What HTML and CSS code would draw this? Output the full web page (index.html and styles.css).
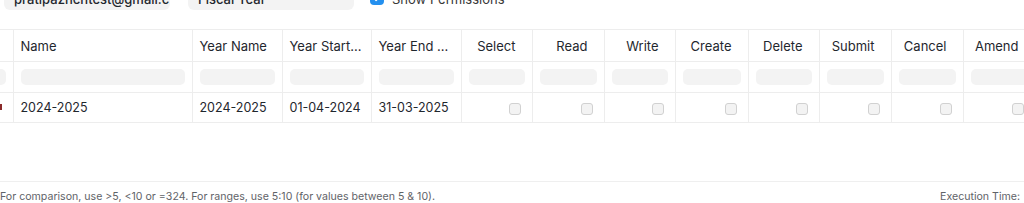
FILE: index.html
```html
<!DOCTYPE html>
<html lang="en">
<head>
    <meta charset="UTF-8">
    <title>User Permissions Report</title>
    <link rel="stylesheet" href="styles.css">
</head>
<body>

    <!-- Filters -->
    <div class="page-form">
        <div class="filter-field">pratipazhentest@gmail.c</div>
        <div class="filter-field">Fiscal Year</div>
        <label class="check-field">
            <span class="checked-box">
                <svg width="10" height="10" viewBox="0 0 10 10"><path d="M2 5.2 L4.2 7.3 L8 2.8" fill="none" stroke="#fff" stroke-width="1.6" stroke-linecap="round" stroke-linejoin="round"/></svg>
            </span>
            Show Permissions
        </label>
    </div>

    <!-- Report grid -->
    <div class="grid-wrapper">
        <table class="report-grid">
            <colgroup>
                <col style="width:40px">
                <col style="width:179px">
                <col style="width:90px">
                <col style="width:89px">
                <col style="width:90px">
                <col style="width:71px">
                <col style="width:72px">
                <col style="width:71px">
                <col style="width:73px">
                <col style="width:71px">
                <col style="width:72px">
                <col style="width:72px">
                <col style="width:72px">
            </colgroup>
            <thead>
                <tr class="head-row">
                    <th></th>
                    <th>Name</th>
                    <th>Year Name</th>
                    <th>Year Start...</th>
                    <th>Year End ...</th>
                    <th class="num">Select</th>
                    <th class="num">Read</th>
                    <th class="num">Write</th>
                    <th class="num">Create</th>
                    <th class="num">Delete</th>
                    <th class="num">Submit</th>
                    <th class="num">Cancel</th>
                    <th class="num">Amend</th>
                </tr>
                <tr class="filter-row">
                    <td><div class="filter-input"></div></td>
                    <td><div class="filter-input"></div></td>
                    <td><div class="filter-input"></div></td>
                    <td><div class="filter-input"></div></td>
                    <td><div class="filter-input"></div></td>
                    <td><div class="filter-input"></div></td>
                    <td><div class="filter-input"></div></td>
                    <td><div class="filter-input"></div></td>
                    <td><div class="filter-input"></div></td>
                    <td><div class="filter-input"></div></td>
                    <td><div class="filter-input"></div></td>
                    <td><div class="filter-input"></div></td>
                    <td><div class="filter-input"></div></td>
                </tr>
            </thead>
            <tbody>
                <tr class="data-row">
                    <td class="row-index"><span class="row-mark"></span></td>
                    <td>2024-2025</td>
                    <td>2024-2025</td>
                    <td>01-04-2024</td>
                    <td>31-03-2025</td>
                    <td class="num"><span class="cell-check"></span></td>
                    <td class="num"><span class="cell-check"></span></td>
                    <td class="num"><span class="cell-check"></span></td>
                    <td class="num"><span class="cell-check"></span></td>
                    <td class="num"><span class="cell-check"></span></td>
                    <td class="num"><span class="cell-check"></span></td>
                    <td class="num"><span class="cell-check"></span></td>
                    <td class="num"><span class="cell-check"></span></td>
                </tr>
            </tbody>
        </table>
    </div>

    <!-- Footer -->
    <div class="report-footer">
        <span>For comparison, use &gt;5, &lt;10 or =324. For ranges, use 5:10 (for values between 5 &amp; 10).</span>
        <span>Execution Time:</span>
    </div>

</body>
</html>
```

FILE: styles.css
```css
body {
    margin: 0;
    font-family: Inter, "Noto Sans", sans-serif;
    color: #1f272e;
    background-color: #fff;
    overflow: hidden;
}

.page-form {
    display: flex;
    align-items: center;
    gap: 18px;
    height: 28px;
    margin-top: -18px;
    padding: 0 0 19px 4px;
    border-bottom: 1px solid #ededed;
}

.filter-field {
    width: 156px;
    height: 25px;
    padding: 3px 0 0 10px;
    line-height: 28px;
    background-color: #f3f3f3;
    border-radius: 6px;
    font-size: 13px;
    font-weight: 500;
    white-space: nowrap;
    overflow: hidden;
}

.check-field {
    display: flex;
    align-items: center;
    gap: 8px;
    margin: 6px 0 0 -2px;
    font-size: 13px;
    color: #383838;
}

.checked-box {
    display: flex;
    align-items: center;
    justify-content: center;
    width: 14px;
    height: 14px;
    margin-bottom: 2px;
    background-color: #2490ef;
    border-radius: 4px;
}

.grid-wrapper {
    overflow: hidden;
    width: 1024px;
}

.report-grid {
    table-layout: fixed;
    border-collapse: collapse;
    margin-left: -27px;
    width: 1062px;
    font-size: 13px;
}

.report-grid th,
.report-grid td {
    border-right: 1px solid #ededed;
    border-bottom: 1px solid #ededed;
    padding: 0 7px;
    text-align: left;
    white-space: nowrap;
    overflow: hidden;
}

.report-grid th {
    font-weight: 400;
    height: 31px;
    color: #1f272e;
}

.report-grid th.num {
    text-align: right;
    padding-right: 16px;
}

.filter-row td {
    height: 30px;
    padding: 0 7px;
}

.filter-input {
    height: 16px;
    background-color: #f3f3f3;
    border-radius: 5px;
}

.data-row td {
    height: 29px;
    font-size: 12.5px;
}

.data-row td.num {
    text-align: right;
    padding-right: 11px;
}

.cell-check {
    display: inline-block;
    width: 10px;
    height: 10px;
    border: 1px solid #d1d1d1;
    border-radius: 3px;
    background-color: #f3f3f3;
    vertical-align: middle;
}

.row-index {
    position: relative;
}

.row-mark {
    position: absolute;
    left: 27px;
    top: 11px;
    width: 2px;
    height: 6px;
    background-color: #8a2a2a;
}

.report-footer {
    display: flex;
    justify-content: space-between;
    margin-top: 58px;
    border-top: 1px solid #efefef;
    padding: 8px 4px 0 0;
    font-size: 10.6px;
    color: #5f6368;
}
```
